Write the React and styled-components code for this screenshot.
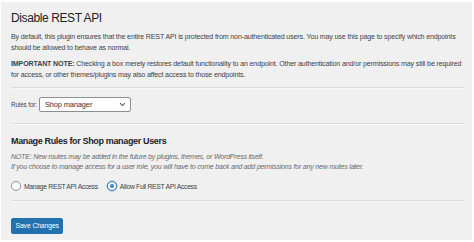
import React from "react";
import styled, { createGlobalStyle } from "styled-components";

const Global = createGlobalStyle`
  html, body { margin: 0; padding: 0; background: #ffffff; }
  body { font-family: "Liberation Sans", Arial, sans-serif; color: #3c434a; }
  * { box-sizing: border-box; }
`;

const Frame = styled.div`
  width: 474px;
  height: 242px;
  padding: 2px 2px 2px 1px;
  background: #ffffff;
`;

const Panel = styled.div`
  height: 238px;
  background: #f0f0f1;
  padding: 8px 8px 0 10px;
  display: flex;
  flex-direction: column;
`;

const Title = styled.h1`
  margin: 0;
  font-size: 12px;
  letter-spacing: -0.4px;
  line-height: 16px;
  font-weight: 400;
  color: #1d2327;
`;

const Para = styled.p`
  margin: ${(p) => p.$mt || 0}px 0 0;
  font-size: 7.1px;
  letter-spacing: -0.15px;
  line-height: 11px;
  color: #3c434a;
`;

const Strong = styled.strong`
  font-weight: 700;
`;

const Rule = styled.hr`
  margin: ${(p) => p.$mt}px 0 0;
  border: 0;
  border-top: 1px solid #dcdcde;
  border-bottom: 1px solid #f6f7f7;
  height: 0;
`;

const FieldRow = styled.div`
  margin-top: 8px;
  display: flex;
  align-items: center;
  gap: 2px;
`;

const Label = styled.span`
  font-size: 6.3px;
  letter-spacing: -0.1px;
  color: #3c434a;
`;

const Select = styled.div`
  width: 92px;
  height: 15px;
  background: #ffffff;
  border: 1px solid #8c8f94;
  border-radius: 2px;
  display: flex;
  align-items: center;
  justify-content: space-between;
  padding: 0 4px 0 5px;
  font-size: 7.4px;
  letter-spacing: -0.1px;
  color: #2c3338;
`;

const Heading = styled.h2`
  margin: 10px 0 0;
  font-size: 9px;
  letter-spacing: -0.35px;
  line-height: 12px;
  font-weight: 700;
  color: #1d2327;
`;

const Note = styled.p`
  margin: 5px 0 0;
  font-size: 7px;
  letter-spacing: -0.2px;
  line-height: 10px;
  font-style: italic;
  color: #646970;
`;

const RadioRow = styled.div`
  margin-top: 9px;
  display: flex;
  align-items: center;
  gap: 9px;
  height: 10px;
`;

const RadioLabel = styled.label`
  display: flex;
  align-items: center;
  gap: 3px;
  font-size: 6.8px;
  letter-spacing: -0.3px;
  color: #3c434a;
`;

const Radio = styled.span`
  width: 10px;
  height: 10px;
  border-radius: 50%;
  background: #ffffff;
  border: 1px solid ${(p) => (p.$checked ? "#2271b1" : "#8c8f94")};
  box-shadow: ${(p) => (p.$checked ? "0 0 0 1px #c5d9ed" : "none")};
  display: flex;
  align-items: center;
  justify-content: center;
  &::after {
    content: "";
    width: 4px;
    height: 4px;
    border-radius: 50%;
    background: ${(p) => (p.$checked ? "#3582c4" : "transparent")};
  }
`;

const Button = styled.button`
  margin-top: 16px;
  align-self: flex-start;
  height: 16px;
  padding: 0 3.5px;
  background: #2271b1;
  border: 1px solid #2271b1;
  border-radius: 2px;
  color: #ffffff;
  font-family: inherit;
  font-size: 6.8px;
  letter-spacing: -0.1px;
  line-height: 14px;
`;

export default function App() {
  return (
    <>
      <Global />
      <Frame>
        <Panel>
          <Title>Disable REST API</Title>
          <Para $mt={6}>
            By default, this plugin ensures that the entire REST API is protected from non-authenticated users. You may use this page to specify which endpoints should be allowed to behave as normal.
          </Para>
          <Para $mt={5}>
            <Strong>IMPORTANT NOTE:</Strong> Checking a box merely restores default functionality to an endpoint. Other authentication and/or permissions may still be required for access, or other themes/plugins may also affect access to those endpoints.
          </Para>
          <Rule $mt={6} />
          <FieldRow>
            <Label>Rules for:</Label>
            <Select>
              <span>Shop manager</span>
              <svg width="7" height="5" viewBox="0 0 7 5">
                <path d="M1 1.2 L3.5 3.6 L6 1.2" fill="none" stroke="#50575e" strokeWidth="1.1" />
              </svg>
            </Select>
          </FieldRow>
          <Rule $mt={11} />
          <Heading>Manage Rules for Shop manager Users</Heading>
          <Note>
            NOTE: New routes may be added in the future by plugins, themes, or WordPress itself.
            <br />
            If you choose to manage access for a user role, you will have to come back and add permissions for any new routes later.
          </Note>
          <RadioRow>
            <RadioLabel>
              <Radio />
              Manage REST API Access
            </RadioLabel>
            <RadioLabel>
              <Radio $checked />
              Allow Full REST API Access
            </RadioLabel>
          </RadioRow>
          <Rule $mt={9} />
          <Button>Save Changes</Button>
        </Panel>
      </Frame>
    </>
  );
}
